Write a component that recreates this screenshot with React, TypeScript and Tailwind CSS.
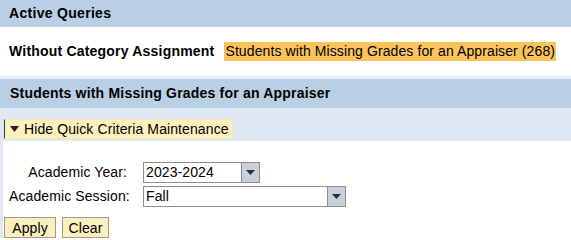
export default function App() {
  return (
    <div className="h-[240px] w-[571px] overflow-hidden bg-white font-['Liberation_Sans',Arial,sans-serif] text-[14px] tracking-[0.1px] text-black">
      <div className="flex h-[27px] items-center bg-[#b9cfe6] pl-[9px] font-bold tracking-[0.3px]">
        Active Queries
      </div>
      <div className="flex h-[49px] items-center pl-[9px]">
        <span className="font-bold tracking-[0.2px]">Without Category Assignment</span>
        <span className="ml-[10px] bg-[#fbc35c] px-[1px] leading-[19px]">
          Students with Missing Grades for an Appraiser (268)
        </span>
      </div>
      <div className="h-[3px] bg-[#e4ecf5]" />
      <div className="flex h-[29px] items-center bg-[#b9cfe6] pl-[10px] font-bold tracking-[0.2px]">
        Students with Missing Grades for an Appraiser
      </div>
      <div className="flex h-[33px] items-start bg-[#dfe8f3] pl-[4px] pt-[11px]">
        <button className="flex h-[20px] w-[229px] items-center gap-[5px] border border-l-[#3a3a3a] border-[#f6e7a8] bg-[#fcf0bf] pl-[5px] leading-none">
          <svg width="9" height="6" viewBox="0 0 9 6">
            <path d="M0 0h9L4.5 6z" fill="#222" />
          </svg>
          Hide Quick Criteria Maintenance
        </button>
      </div>
      <div className="flex">
        <div className="w-[3px] bg-[#dfe8f3]" />
        <div className="flex-1 pt-[21px]">
          <div className="grid grid-cols-[118px_auto] items-center gap-x-[16px] gap-y-[3px] pl-[6px]">
            <span className="whitespace-nowrap text-right">Academic Year:</span>
            <Select value="2023-2024" width="w-[117px]" />
            <span className="whitespace-nowrap text-right">Academic Session:</span>
            <Select value="Fall" width="w-[203px]" />
          </div>
          <div className="mt-[10px] flex gap-[6px] pl-[1px]">
            <button className="h-[21px] w-[52px] border border-[#a09a86] bg-[#fbefbd] leading-none">Apply</button>
            <button className="h-[21px] w-[47px] border border-[#a09a86] bg-[#fbefbd] leading-none">Clear</button>
          </div>
        </div>
      </div>
    </div>
  );
}

function Select({ value, width }: { value: string; width: string }) {
  return (
    <div className={`flex h-[21px] ${width} border border-[#8c8c8c] bg-white`}>
      <span className="flex-1 pl-[2px] leading-[19px]">{value}</span>
      <span className="flex w-[18px] items-center justify-center border-l border-[#8c8c8c] bg-[#c7d0dc]">
        <svg width="9" height="5" viewBox="0 0 9 5">
          <path d="M0 0h9L4.5 5z" fill="#2a2f3a" />
        </svg>
      </span>
    </div>
  );
}
